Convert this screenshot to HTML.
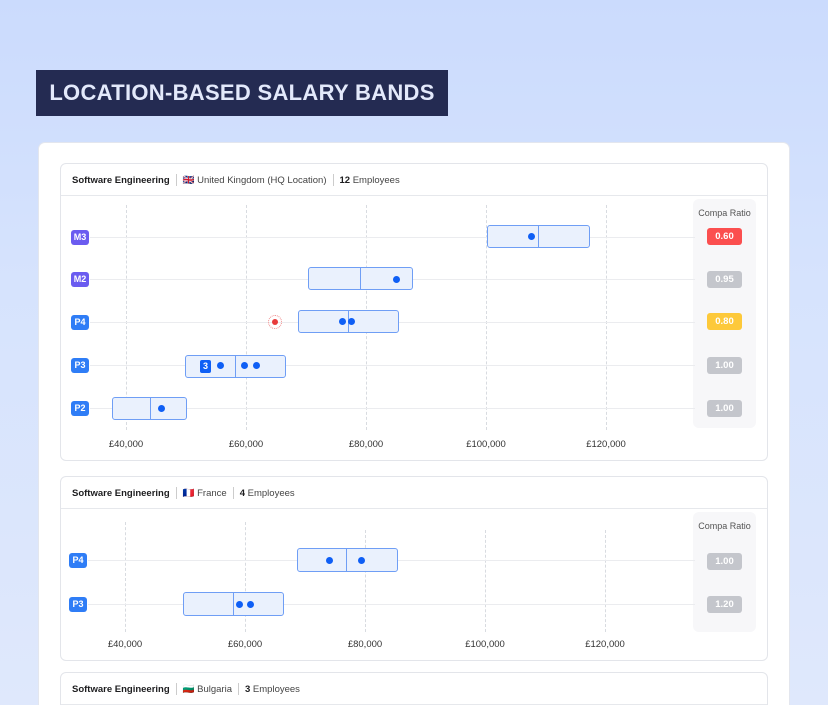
<!DOCTYPE html>
<html><head><meta charset="utf-8"><style>
*{margin:0;padding:0;box-sizing:border-box}
html,body{width:828px;height:705px;overflow:hidden}
body{background:linear-gradient(180deg,#cbdbfd 0%,#d6e3fd 40%,#dfe8fc 100%);font-family:"Liberation Sans",sans-serif;position:relative}
.a{position:absolute}
.title{left:36px;top:70px;width:412px;height:46px;background:#242b52;color:#e3e9fb;font-size:22px;font-weight:bold;letter-spacing:0.3px;line-height:46px;text-align:center;white-space:nowrap}
.outer{left:38px;top:142px;width:752px;height:580px;background:#fff;border-radius:7px;border:1px solid #e3e6ee}
.card{left:60px;width:708px;background:#fff;border:1px solid #e3e5ea;border-radius:6px}
.hdr{position:absolute;left:0;top:0;right:0;height:32px;border-bottom:1px solid #e6e8ec;font-size:9.5px;color:#444;line-height:34px;padding-left:11px;white-space:nowrap}
.hdr b{color:#1d1d1f}
.sep{display:inline-block;width:1px;height:12px;background:#ccc;vertical-align:middle;margin:0 6px}
.vl{width:0;border-left:1px dashed #d8dbe0}
.hl{height:1px;background:#ebecef}
.lab{width:18px;height:15px;border-radius:3px;color:#fff;font-size:9px;font-weight:bold;text-align:center;line-height:15px}
.p{background:#2f7df6}.m{background:#6b5cf0}
.box{height:23px;background:#eaf1fd;border:1px solid #6f9ef5;border-radius:3px}
.med{width:1px;background:#6f9ef5}
.dot{width:7px;height:7px;border-radius:50%;background:#0f5ff5}
.ax{font-size:9.5px;color:#333;width:60px;text-align:center}
.cp{background:#f7f7f9;border-radius:6px}
.ct{font-size:9px;color:#555;width:63px;text-align:center}
.bd{width:35px;height:17px;border-radius:3px;color:#fff;font-size:9.5px;font-weight:bold;text-align:center;line-height:17px}
.g{background:#c4c6cc}
</style></head><body>
<div class="a title">LOCATION-BASED SALARY BANDS</div>
<div class="a outer"></div>

<div class="a card" style="top:163px;height:298px">
 <div class="hdr"><b>Software Engineering</b><span class="sep"></span>🇬🇧 United Kingdom (HQ Location)<span class="sep"></span><b>12</b> Employees</div>
</div>
<div class="a cp" style="left:693px;top:199px;width:63px;height:229px"></div>
<div class="a ct" style="left:693px;top:208px">Compa Ratio</div>
<div class="a vl" style="left:126px;top:205px;height:225px"></div>
<div class="a vl" style="left:246px;top:205px;height:225px"></div>
<div class="a vl" style="left:366px;top:205px;height:225px"></div>
<div class="a vl" style="left:486px;top:205px;height:225px"></div>
<div class="a vl" style="left:606px;top:205px;height:225px"></div>
<div class="a hl" style="left:90px;top:237px;width:605px"></div>
<div class="a hl" style="left:90px;top:279px;width:605px"></div>
<div class="a hl" style="left:90px;top:322px;width:605px"></div>
<div class="a hl" style="left:90px;top:365px;width:605px"></div>
<div class="a hl" style="left:90px;top:408px;width:605px"></div>
<div class="a lab m" style="left:71px;top:230px">M3</div>
<div class="a lab m" style="left:71px;top:272px">M2</div>
<div class="a lab p" style="left:71px;top:315px">P4</div>
<div class="a lab p" style="left:71px;top:358px">P3</div>
<div class="a lab p" style="left:71px;top:401px">P2</div>
<div class="a box" style="left:487px;top:225px;width:103px"></div><div class="a med" style="left:538px;top:226px;height:21px"></div><div class="a dot" style="left:528px;top:233px"></div>
<div class="a box" style="left:308px;top:267px;width:105px"></div><div class="a med" style="left:360px;top:268px;height:21px"></div><div class="a dot" style="left:393px;top:276px"></div>
<div class="a box" style="left:298px;top:310px;width:101px"></div><div class="a med" style="left:348px;top:311px;height:21px"></div><div class="a dot" style="left:339px;top:318px"></div><div class="a dot" style="left:348px;top:318px"></div>
<div class="a" style="left:268px;top:315px;width:14px;height:14px;border-radius:50%;border:1px dotted #f08a8a"></div><div class="a" style="left:272px;top:319px;width:6px;height:6px;border-radius:50%;background:#e83b3b"></div>
<div class="a box" style="left:185px;top:355px;width:101px"></div><div class="a med" style="left:235px;top:356px;height:21px"></div>
<div class="a" style="left:200px;top:360px;width:11px;height:13px;border-radius:2px;background:#0f5ff5;color:#fff;font-size:9px;font-weight:bold;text-align:center;line-height:13px">3</div>
<div class="a dot" style="left:217px;top:362px"></div><div class="a dot" style="left:241px;top:362px"></div><div class="a dot" style="left:253px;top:362px"></div>
<div class="a box" style="left:112px;top:397px;width:75px"></div><div class="a med" style="left:150px;top:398px;height:21px"></div><div class="a dot" style="left:158px;top:405px"></div>
<div class="a ax" style="left:96px;top:439px">£40,000</div>
<div class="a ax" style="left:216px;top:439px">£60,000</div>
<div class="a ax" style="left:336px;top:439px">£80,000</div>
<div class="a ax" style="left:456px;top:439px">£100,000</div>
<div class="a ax" style="left:576px;top:439px">£120,000</div>
<div class="a bd" style="left:707px;top:228px;background:#fb4f4f">0.60</div>
<div class="a bd g" style="left:707px;top:271px">0.95</div>
<div class="a bd" style="left:707px;top:313px;background:#fdc93a">0.80</div>
<div class="a bd g" style="left:707px;top:357px">1.00</div>
<div class="a bd g" style="left:707px;top:400px">1.00</div>

<div class="a card" style="top:476px;height:185px">
 <div class="hdr"><b>Software Engineering</b><span class="sep"></span>🇫🇷 France<span class="sep"></span><b>4</b> Employees</div>
</div>
<div class="a cp" style="left:693px;top:512px;width:63px;height:120px"></div>
<div class="a ct" style="left:693px;top:521px">Compa Ratio</div>
<div class="a vl" style="left:125px;top:522px;height:110px"></div>
<div class="a vl" style="left:245px;top:522px;height:110px"></div>
<div class="a vl" style="left:365px;top:530px;height:102px"></div>
<div class="a vl" style="left:485px;top:530px;height:102px"></div>
<div class="a vl" style="left:605px;top:530px;height:102px"></div>
<div class="a hl" style="left:88px;top:560px;width:607px"></div>
<div class="a hl" style="left:88px;top:604px;width:607px"></div>
<div class="a lab p" style="left:69px;top:553px">P4</div>
<div class="a lab p" style="left:69px;top:597px">P3</div>
<div class="a box" style="left:297px;top:548px;width:101px;height:24px"></div><div class="a med" style="left:346px;top:549px;height:22px"></div><div class="a dot" style="left:326px;top:557px"></div><div class="a dot" style="left:358px;top:557px"></div>
<div class="a box" style="left:183px;top:592px;width:101px;height:24px"></div><div class="a med" style="left:233px;top:593px;height:22px"></div><div class="a dot" style="left:236px;top:601px"></div><div class="a dot" style="left:247px;top:601px"></div>
<div class="a ax" style="left:95px;top:639px">£40,000</div>
<div class="a ax" style="left:215px;top:639px">£60,000</div>
<div class="a ax" style="left:335px;top:639px">£80,000</div>
<div class="a ax" style="left:455px;top:639px">£100,000</div>
<div class="a ax" style="left:575px;top:639px">£120,000</div>
<div class="a bd g" style="left:707px;top:553px">1.00</div>
<div class="a bd g" style="left:707px;top:596px">1.20</div>

<div class="a card" style="top:672px;height:45px">
 <div class="hdr"><b>Software Engineering</b><span class="sep"></span>🇧🇬 Bulgaria<span class="sep"></span><b>3</b> Employees</div>
</div>
</body></html>
